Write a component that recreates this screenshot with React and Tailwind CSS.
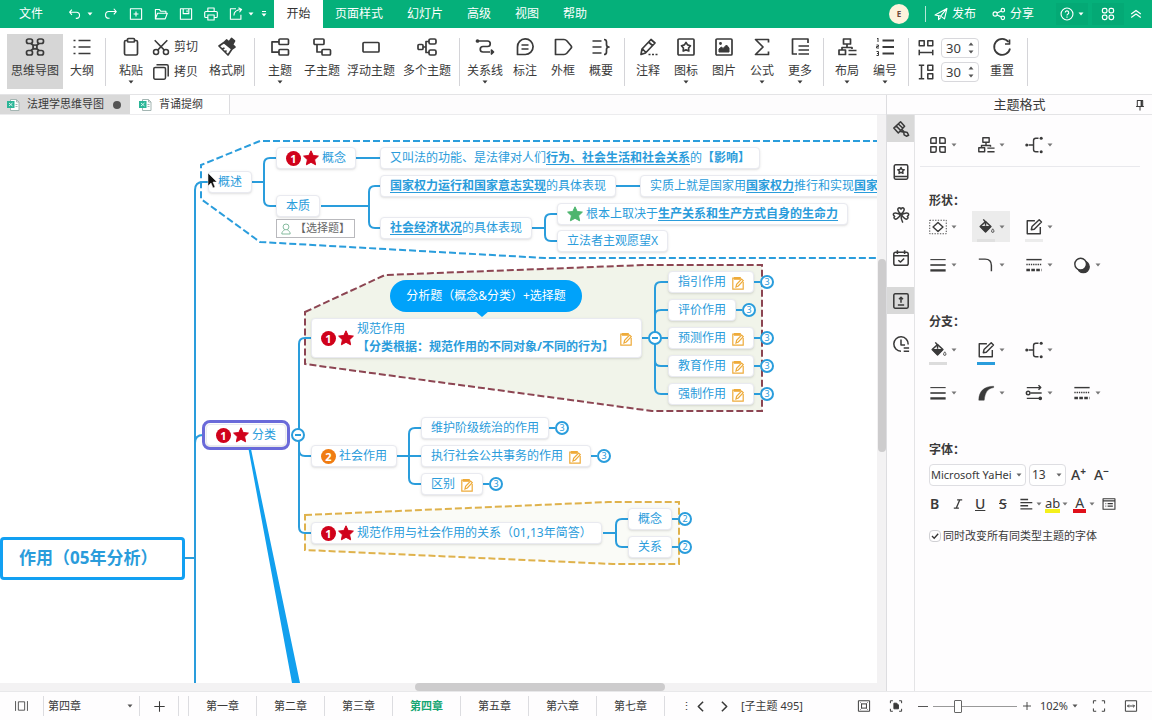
import React, { useState } from 'react';

const ICONS = {
    undo: <path d="M6 2.500 2.500 6.500 6 10.500M2.500 6.500H13a4.700 4.700 0 0 1 0 9.500h-1" />,
    redo: <path d="M14 2.500l3.500 4-3.500 4M17.500 6.500H7A4.700 4.700 0 0 0 7 16h1" />,
    newDoc: <path d="M2 2.500h16v15H2zM10 6.500v7M6.500 10h7" />,
    open: <path d="M2 17V3.500h5.500l2 2.500H17v3M2 17l3-8h14l-3 8z" />,
    save: <path d="M2 2.500h16v15H2zM6 2.500v7h8v-7M11.500 4.500v3" />,
    print: <path d="M5.500 6.500v-5h9v5M5 15H2.500A1.500 1.500 0 0 1 1 13.500V8a1.500 1.500 0 0 1 1.500-1.500h15A1.500 1.500 0 0 1 19 8v5.500a1.500 1.500 0 0 1-1.500 1.500H15M5.500 11.500h9v7h-9z" />,
    exportTo: <path d="M10 2.500H2v15h15V11M7 12c0-5 3-8 10.500-8.500M13.500 1l4.500 2.500L15 7.500" />,
    send: <path d="M1.500 11.500 18.500 2l-3.500 15-5.500-4zM9.500 13 18.500 2M6.500 12.500V18l3-3" />,
    share: <><circle cx="4.500" cy="10" r="3" /><circle cx="15.500" cy="4.500" r="2.500" /><circle cx="15.500" cy="15.500" r="2.500" /><path d="m7.200 8.700 6-3M7.200 11.300l6 3" /></>,
    help: <><circle cx="10" cy="10" r="8.500" /><path d="M7.500 8a2.500 2.500 0 1 1 3.500 2.300c-.7.300-1 .700-1 1.700M10 13.700v1.500" /></>,
    apps: <><rect x="2" y="2" width="6.500" height="6.500" rx="2.500" /><rect x="11.500" y="2" width="6.500" height="6.500" rx="2.500" /><rect x="2" y="11.500" width="6.500" height="6.500" rx="2.500" /><rect x="11.500" y="11.500" width="6.500" height="6.500" rx="2.500" /></>,
    up: <path d="m2 10 8-6 8 6M2 16l8-6 8 6" />,

    mindmap: <><rect x="1.500" y="2" width="6" height="4.500" rx="2" /><rect x="12.500" y="2" width="6" height="4.500" rx="2" /><rect x="1.500" y="13.500" width="6" height="4.500" rx="2" /><rect x="12.500" y="13.500" width="6" height="4.500" rx="2" /><circle cx="10" cy="10" r="2" /><path d="m6 6.500 2.500 2M14 6.500l-2.500 2M6 13.500l2.500-2M14 13.500l-2.500-2" /></>,
    outline: <path d="M1.500 3.500h2M1.500 10h2M1.500 16.500h2M6.500 3.500H18.500M6.500 10H18.500M6.500 16.500H18.500" />,
    paste: <><rect x="3.500" y="3.500" width="13" height="14.500" rx="1.500" /><rect x="6.500" y="1.500" width="7" height="3.500" rx="1" fill="white" /></>,
    cut: <><circle cx="4.500" cy="15.500" r="2.800" /><circle cx="15.500" cy="15.500" r="2.800" /><path d="m3 2.500 10.700 11M17 2.500l-10.700 11" /></>,
    copy: <><rect x="2" y="5" width="13" height="13" rx="1.500" /><path d="M5 2h11.500A1.500 1.500 0 0 1 18 3.500V15" /></>,
    brush: <><path d="m14.500 1.500 3 2.500-2 3.500 2.500 2.500-3 2L7 5.500l2.500-2.500 2.500 2z" fill="currentColor" /><path d="M7 5.500 2 9l9 9 4-6M5 12l2.500-1M8 15l1.500-1.500" /></>,
    topic: <><rect x="9" y="2" width="9.500" height="5.500" rx="1" /><rect x="9" y="12.500" width="9.500" height="5.500" rx="1" /><path d="M9 4.800H2v10.400h7" /></>,
    subtopic: <><rect x="2" y="2" width="10" height="5.500" rx="1" /><rect x="10" y="12.500" width="8.500" height="5.500" rx="1" /><path d="M5 7.500V15h5" /></>,
    floating: <rect x="2" y="5.500" width="16" height="9.500" rx="1" />,
    multi: <><rect x="1" y="7.500" width="5" height="5" rx="1" /><rect x="12" y="2" width="7" height="5" rx="1.500" /><rect x="12" y="13" width="7" height="5" rx="1.500" /><path d="M6 10h3M12 4.500H9v11h3" /></>,
    relation: <><circle cx="2.500" cy="4" r="1" fill="currentColor" /><path d="M4 4h8.500a2.700 2.700 0 0 1 0 5.500H8A2.700 2.700 0 0 0 8 15h7" /><path d="m16.500 13 2 2-2 2z" fill="currentColor" /></>,
    comment: <path d="M2.500 17.500V10A7.800 7.800 0 1 1 10.300 17.500zM6.500 8h7M6.500 12h7" />,
    boundary: <path d="M2.500 2.500h8.500c1.500 0 2 .4 3 1.500l4 4.700c.6.700.6 1.900 0 2.600L14 16c-1 1.100-1.500 1.500-3 1.500H2.500z" />,
    summary: <path d="M1.500 4h9M1.500 10h9M1.500 16h9M13 2.500c2 0 2.500.5 2.500 2.500v2.500c0 1.500.5 2.500 2.500 2.500-2 0-2.500 1-2.500 2.500V15c0 2-.5 2.500-2.500 2.500" />,
    remark: <><path d="M3 17.500 4 12 13 2.500l4 3.500-9.500 10zM10.500 5l4 3.500M4.500 12l3.500 3.500" /><path d="M10.500 17.500h9" strokeDasharray="2 1.500" /></>,
    sticker: <><rect x="2" y="2" width="16" height="16" rx="1" /><path d="m10 5.500 1.600 2.400 2.900.8-1.900 2.300.2 3-2.800-1.100L7.200 14l.2-3-1.900-2.300 2.900-.8z" /></>,
    picture: <><rect x="2" y="2" width="16" height="16" rx="1" /><path d="M5 15v-3l2.500-2L9 11.500 12.500 8l2.500 3v4z" fill="currentColor" strokeWidth="1" /><circle cx="6.500" cy="6.500" r=".6" fill="currentColor" /></>,
    formula: <path d="M16.500 5.500v-3H3.500L11 10l-7.500 7.500h13v-3" />,
    more: <path d="M18 6V2H2.500v15H7M8.500 9H19M8.500 13H19M8.500 17H19" />,
    layout: <><rect x="6.500" y="2" width="7" height="5" /><path d="M10 7v3.500M5 13v-2.500h10V12M11.500 13.500h8M11.500 17.500h8" /><rect x="2" y="13" width="6.500" height="4.500" /></>,
    numbering: <><path d="M7.500 3.500H19M7.500 10H19M7.500 16.500H19" strokeWidth="2.200" /><path d="M2 2l1-1v4M1.500 8h2v1.500h-2V11h2.500M1.500 14.500h2v4h-2M2 16.500h1.500" strokeWidth="1" /></>,
    hgap: <><rect x="2.500" y="2" width="5.500" height="5.500" /><rect x="12" y="2" width="5.500" height="5.500" /><path d="M2.500 12v6M17.500 12v6M2.500 15h15" /></>,
    vgap: <><rect x="12" y="2.500" width="5.500" height="5.500" /><rect x="12" y="12" width="5.500" height="5.500" /><path d="M2 2.500h6M2 17.500h6M5 2.500v15" /></>,
    reset: <><path d="M16.500 5A8 8 0 1 0 18 11.500" /><path d="M17.500 2.500v4.500H13" /></>,

    format: <path d="m2 9 7.500-7 4.500 5-7 7.500zM4.500 6.500 10 12M7 4.500l5.500 5M9 12.500l2-2 2.500 2.500 3.500 1 1.500 3-2.500 1-2.500-1.500-.5-3z" />,
    gallery: <><rect x="2.500" y="2" width="15" height="16" rx="1.500" /><path d="M2.500 15h15M10 5l1.100 2.200 2.400.3-1.700 1.700.4 2.300-2.200-1.100-2.200 1.100.4-2.300-1.700-1.700 2.400-.3z" /></>,
    clover: <><path d="M10 9C6 6 5.500 2.500 8 2c1 0 2 .7 2 1.500C10 2.700 11 2 12 2c2.500.5 2 4-2 7zM9.500 9.500C5 7.500 1.500 7 1.500 9.500c0 1 .5 1.500 1.500 2-.7.500-1 1.500-.5 2.300C4 16 8 13 9.500 9.500zM10.500 9.500c4.500-2 8-2.500 8 0 0 1-.5 1.500-1.500 2 .7.500 1 1.500.5 2.300-1.500 2.200-5.500-.8-7-4.300z" /><path d="M10 9.500c0 4 0 6 2 9" /></>,
    calendar: <><rect x="2" y="3.500" width="16" height="14.500" rx="2" /><path d="M2 7.500h16M6 1.500v4M14 1.500v4M7 12.500l2.500 2 4-4" /></>,
    slides: <><rect x="2" y="2" width="16" height="16" rx="1.500" /><path d="M6.500 14.500h7M10 12V6.500M7.800 8 10 5.800 12.200 8" /></>,
    history: <path d="M18 10.500A8 8 0 1 0 10 18M10 5v6h4.500M13 14.500h6M13 18h6" />,

    squares: <><path d="M2 4a2 2 0 0 1 2-2h4v6H2zM12 2h4a2 2 0 0 1 2 2v4h-6zM2 12h6v4a2 2 0 0 1-2 2H2zM12 12h6v6h-4a2 2 0 0 1-2-2z" /></>,
    branch: <><circle cx="2" cy="10" r="1.700" fill="currentColor" strokeWidth="0" /><path d="M4 10h5.500M15 2.500h-3q-2.500 0-2.500 2.500v10q0 2.500 2.500 2.500h3" /><circle cx="18" cy="2.500" r="1.700" fill="currentColor" strokeWidth="0" /><circle cx="18" cy="17.500" r="1.700" fill="currentColor" strokeWidth="0" /></>,
    shape: <><rect x=".8" y="2.500" width="18.400" height="15" strokeWidth="1" strokeDasharray="1.500 1.500" /><path d="m10 5 5.500 5-5.500 5-5.500-5z" /></>,
    fill: <><path d="m9.500 4 6 5.500-6 6-6-6z" /><path d="M4.500 9.800h10l-5 5z" fill="currentColor" /><path d="M7 1.500 9.500 4.500v4" /><path d="M17.500 12c1 1.500 1.300 2 1.300 2.700a1.300 1.300 0 0 1-2.600 0c0-.7.300-1.200 1.300-2.700z" strokeWidth="1" /></>,
    edit: <><path d="M11 3H2.500v14.500H17V10" /><path d="m7 13 .8-3.500 8-7.500 2.500 2.500-8 8z" /></>,
    weight: <><path d="M1.500 4h17" strokeWidth="1.200" /><path d="M1.500 10h17" strokeWidth="1.800" /><path d="M1.500 16h17" strokeWidth="2.600" /></>,
    corner: <path d="M2 3.500h7q7 0 7 7V17" />,
    dashes: <><path d="M1.500 4h17" /><path d="M1.500 9.500h17" strokeDasharray="1.500 1" /><path d="M1.500 15.500h17" strokeWidth="2.800" strokeDasharray="4 1.500" /></>,
    shadow: <><circle cx="11.500" cy="12" r="6.500" fill="currentColor" /><circle cx="8.500" cy="9" r="6.500" fill="white" /></>,
    taper: <path d="M2 18C2 8 8 2.500 18.500 2.500v1.500C12 5 9 9 8 18z" fill="currentColor" strokeWidth=".5" />,
    arrows: <><path d="M2 4h15M15 1.500 17.500 4 15 6.500M6 10h12.500M2 16h14" /><circle cx="3.500" cy="10" r="2" /><circle cx="17" cy="16" r="1.200" fill="currentColor" /></>,
    align: <path d="M2 3.500h11M2 8h17M2 12.500h11M2 17h17" />,
    italic: <path d="M8.500 3H17M3 17h8.500M13 3 7 17" />,
    dialog: <path d="M1.500 2.500h17v15h-17zM1.500 5.500h17M5 9.500h1M8 9.500h7.500M5 13h1M8 13h7.500" />,
    pin: <><path d="M5.500 2.500h9v10h-9zM3.500 12.500h13M10 12.500V19" /><path d="M12.500 3v9.500" strokeWidth="3" /></>,

    navPane: <path d="M1.500 3v14M18.500 3v14M5.500 4h9v12h-9z" />,
    plus: <path d="M10 2v16M2 10h16" />,
    prev: <path d="m13.500 2-8 8 8 8" />,
    next: <path d="m6.500 2 8 8-8 8" />,
    fit: <path d="M2 2.500h16v15H2zM6.500 7h7v6h-7zM5 5l1.500 1.500M15 5l-1.500 1.500M5 15l1.500-1.500M15 15l-1.500-1.500" />,
    focus: <><path d="M2 6V2.500h3.500M14.500 2.500H18V6M18 14v3.500h-3.500M5.500 17.500H2V14" /><path d="M7 6h4l2.500 2.500V14H7z" fill="currentColor" /></>,
    full: <path d="M2 6.500V2.500h4M14 2.500h4v4M18 13.500v4h-4M6 17.500H2v-4" />,
    fitWidth: <path d="M2 2.500h16v15H2zM5 10h10M7 8l-2 2 2 2M13 8l2 2-2 2" />,
};

function Icon({ name, className = "w-5 h-5", stroke = 1.7 }) {
    return (
        <svg viewBox="0 0 20 20" fill="none" stroke="currentColor" strokeWidth={stroke} strokeLinejoin="round" className={className + " shrink-0"} aria-hidden="true">
            {ICONS[name]}
        </svg>
    );
}

function Caret({ className = "" }) {
    return (
        <svg viewBox="0 0 6 4" className={"w-[6px] h-1 shrink-0 " + className} aria-hidden="true">
            <path d="M0.500 0.500h5L3 3.500z" fill="currentColor" />
        </svg>
    );
}

const QUICK = ["redo", "newDoc", "open", "save", "print"];
const MENUS = ["开始", "页面样式", "幻灯片", "高级", "视图", "帮助"];

function TopBar() {
    const [menu, setMenu] = useState("开始");

    return (
        <header className="h-7 shrink-0 bg-[#05b07a] text-white flex items-stretch text-xs">
            <button className="w-[62px]">文件</button>
            <div className="w-[212px] flex items-center gap-[11px] pl-[6px]">
                <button aria-label="undo" className="flex items-center gap-[6px]">
                    <Icon name="undo" className="w-[13px] h-[13px]" />
                    <Caret />
                </button>
                {QUICK.map((name) => (
                    <button key={name} aria-label={name}><Icon name={name} className="w-[14px] h-[14px]" stroke={1.6} /></button>
                ))}
                <button className="flex items-center gap-[5px]" aria-label="export">
                    <Icon name="exportTo" className="w-[14px] h-[14px]" stroke={1.6} />
                    <Caret />
                </button>
                <button aria-label="customize" className="flex flex-col items-center -ml-1">
                    <span className="w-1 h-px bg-white mb-px"></span>
                    <Caret />
                </button>
            </div>
            <nav className="flex">
                {MENUS.map((name) => (
                    <button
                        key={name}
                        onClick={() => setMenu(name)}
                        className={menu === name ? "w-[49px] bg-white text-[#333]" : "px-3"}
                    >
                        {name}
                    </button>
                ))}
            </nav>
            <div className="ml-auto flex items-center pr-1">
                <span className="w-5 h-5 rounded-full bg-[#fdf3dc] text-[#6b4a3a] text-[8px] font-bold flex items-center justify-center">E</span>
                <span className="w-px h-4 bg-white/70 ml-4"></span>
                <button className="flex items-center gap-1 ml-2"><Icon name="send" className="w-[14px] h-[14px]" stroke={1.6} />发布</button>
                <button className="flex items-center gap-1 ml-4"><Icon name="share" className="w-[14px] h-[14px]" stroke={1.6} />分享</button>
                <button className="w-8 h-[22px] bg-[#04a975] flex items-center justify-center gap-1 ml-[22px]" aria-label="help">
                    <Icon name="help" className="w-[14px] h-[14px]" stroke={1.6} /><Caret />
                </button>
                <button className="w-8 h-[22px] bg-[#04a975] flex items-center justify-center ml-1" aria-label="apps">
                    <Icon name="apps" className="w-[14px] h-[14px]" stroke={1.8} />
                </button>
                <button className="w-6 flex items-center justify-center" aria-label="collapse"><Icon name="up" className="w-3 h-3" stroke={2} /></button>
            </div>
        </header>
    );
}

function Sep() {
    return <span className="w-px h-12 bg-[#d4d4d8] mx-1 mt-1 shrink-0"></span>;
}

function RibbonButton({ icon, label, width = "w-[38px]", caret, active }) {
    return (
        <button className={"h-[55px] pt-[3px] flex flex-col items-center shrink-0 whitespace-nowrap " + width + (active ? " bg-[#d6d6d6]" : "")}>
            <Icon name={icon} />
            <span className="leading-4 mt-[6px]">{label}</span>
            {caret && <Caret className="mt-px" />}
        </button>
    );
}

function GapField({ icon, label }) {
    const [value, setValue] = useState(30);
    return (
        <div className="flex items-center gap-[6px]">
            <Icon name={icon} className="w-[18px] h-[18px]" />
            <span className="w-[38px] h-5 border border-[#d8d8dc] rounded-sm flex items-center justify-between px-1">
                <input aria-label={label} className="w-5 h-[18px] text-[13px] leading-[18px] outline-none" value={value} onChange={(e) => setValue(e.target.value)} />
                <span className="flex flex-col gap-1 text-[#555]">
                    <Caret className="rotate-180" />
                    <Caret />
                </span>
            </span>
        </div>
    );
}

function Ribbon() {
    return (
        <div className="h-[66px] shrink-0 bg-white pt-[6px] pl-[7px] flex items-start text-xs overflow-hidden">
            <RibbonButton icon="mindmap" label="思维导图" width="w-14" active />
            <RibbonButton icon="outline" label="大纲" />
            <Sep />
            <RibbonButton icon="paste" label="粘贴" width="w-[42px]" caret />
            <div className="w-[52px] shrink-0 flex flex-col gap-[5px] pt-[3px] whitespace-nowrap">
                <button className="flex items-center gap-1 h-5"><Icon name="cut" className="w-[18px] h-[18px]" />剪切</button>
                <button className="flex items-center gap-1 h-5"><Icon name="copy" className="w-[18px] h-[18px]" />拷贝</button>
            </div>
            <RibbonButton icon="brush" label="格式刷" width="w-[46px]" />
            <Sep />
            <RibbonButton icon="topic" label="主题" width="w-[42px]" caret />
            <RibbonButton icon="subtopic" label="子主题" width="w-[42px]" />
            <RibbonButton icon="floating" label="浮动主题" width="w-14" />
            <RibbonButton icon="multi" label="多个主题" width="w-14" />
            <Sep />
            <RibbonButton icon="relation" label="关系线" width="w-[42px]" caret />
            <RibbonButton icon="comment" label="标注" />
            <RibbonButton icon="boundary" label="外框" />
            <RibbonButton icon="summary" label="概要" />
            <Sep />
            <RibbonButton icon="remark" label="注释" />
            <RibbonButton icon="sticker" label="图标" caret />
            <RibbonButton icon="picture" label="图片" />
            <RibbonButton icon="formula" label="公式" caret />
            <RibbonButton icon="more" label="更多" caret />
            <Sep />
            <RibbonButton icon="layout" label="布局" caret />
            <RibbonButton icon="numbering" label="编号" caret />
            <Sep />
            <div className="flex flex-col gap-1 pt-1 pl-1 pr-[2px]">
                <GapField icon="hgap" label="水平间距" />
                <GapField icon="vgap" label="垂直间距" />
            </div>
            <RibbonButton icon="reset" label="重置" width="w-[42px]" />
            <Sep />
        </div>
    );
}

function FileIcon() {
    return (
        <svg viewBox="0 0 14 14" className="w-[14px] h-[14px] shrink-0" aria-hidden="true">
            <path d="M4.500 1.500h6l2.500 2.500v8.500h-8.500z" fill="#fff" stroke="#a3b5b2" />
            <path d="M10.500 1.500v2.500h2.500M9.500 6.500h2M9.500 8.500h2" fill="none" stroke="#a3b5b2" />
            <rect x="1" y="3" width="7.500" height="7" fill="#2bb597" />
            <path d="m3 5 3.500 3M6.500 5 3 8" stroke="#d9f5ee" />
        </svg>
    );
}

function DocTabs() {
    return (
        <div className="h-5 shrink-0 flex bg-[#fdfcfd] border-b border-[#ececee] text-[11px]">
            <button className="w-[130px] bg-[#d9d9d9] flex items-center gap-[7px] pl-[6px]">
                <FileIcon />法理学思维导图
                <span className="w-2 h-2 rounded-full bg-[#555] ml-[2px]"></span>
            </button>
            <button className="w-[100px] bg-white flex items-center gap-[7px] pl-2 border-r border-[#dcdcdf]">
                <FileIcon />背诵提纲
            </button>
        </div>
    );
}

function Badge({ n, orange }) {
    return (
        <span className={"w-[15px] h-[15px] rounded-full text-white text-[11px] leading-[15px] text-center font-bold " + (orange ? "bg-[#f07c12]" : "bg-[#d0021b]")}>
            {n}
        </span>
    );
}

function Star({ color = "#d0021b" }) {
    return (
        <svg viewBox="0 0 16 16" className="w-4 h-4 shrink-0" aria-hidden="true">
            <path d="m8 .8 2.200 4.700 5.200.6-3.800 3.600 1 5.100L8 12.300l-4.600 2.500 1-5.100L.6 6.100l5.200-.6z" fill={color} stroke={color} strokeLinejoin="round" />
        </svg>
    );
}

function NoteIcon() {
    return (
        <svg viewBox="0 0 12 14" fill="none" stroke="#eeab3a" strokeWidth="1.200" className="w-3 h-[14px] shrink-0 mt-[2px]" aria-hidden="true">
            <path d="M9 2.200H.8v11h10.400V6" />
            <path d="M2.500 1.700h5.500v1.500H2.500z" fill="#eeab3a" />
            <path d="m4 11 .6-2.600 5-5.400 1.700 1.600-5 5.400z" fill="#fff" />
        </svg>
    );
}

const B = ({ children }) => <b className="font-bold underline underline-offset-2">{children}</b>;

// x is the left edge, y the vertical middle of a node
const NODES = [
    { x: 208, y: 67, text: "概述" },
    { x: 276, y: 43, badge: 1, star: "#d0021b", text: "概念" },
    { x: 276, y: 91, text: "本质" },
    { x: 380, y: 43, text: <>又叫法的功能、是法律对人们<B>行为、社会生活和社会关系</B>的<b>【影响】</b></> },
    { x: 380, y: 71, text: <><B>国家权力运行和国家意志实现</B>的具体表现</> },
    { x: 640, y: 71, text: <>实质上就是国家用<B>国家权力</B>推行和实现<B>国家</B></> },
    { x: 380, y: 113, text: <><B>社会经济状况</B>的具体表现</> },
    { x: 557, y: 99, star: "#4db56e", text: <>根本上取决于<B>生产关系和生产方式自身的生命力</B></> },
    { x: 557, y: 126, text: "立法者主观愿望X" },
    { x: 311, y: 223, badge: 1, star: "#d0021b", note: true, tall: true, text: <>规范作用<br /><b>【分类根据：规范作用的不同对象/不同的行为】</b></> },
    { x: 668, y: 167, note: true, count: 3, text: "指引作用" },
    { x: 668, y: 195, count: 3, text: "评价作用" },
    { x: 668, y: 223, note: true, count: 3, text: "预测作用" },
    { x: 668, y: 251, note: true, count: 3, text: "教育作用" },
    { x: 668, y: 279, note: true, count: 3, text: "强制作用" },
    { x: 206, y: 320, badge: 1, star: "#d0021b", selected: true, text: "分类" },
    { x: 311, y: 341, badge: 2, text: "社会作用" },
    { x: 421, y: 313, count: 3, text: "维护阶级统治的作用" },
    { x: 421, y: 341, note: true, count: 3, text: "执行社会公共事务的作用" },
    { x: 421, y: 369, note: true, count: 3, text: "区别" },
    { x: 311, y: 418, badge: 1, star: "#d0021b", text: "规范作用与社会作用的关系（01,13年简答）" },
    { x: 628, y: 404, count: 2, text: "概念" },
    { x: 628, y: 432, count: 2, text: "关系" },
];

function Node({ node }) {
    return (
        <div className="absolute flex items-center -translate-y-1/2" style={{ left: node.x, top: node.y }}>
            <div
                className={
                    "flex items-center bg-white border border-[#e9eaf0] rounded-sm shadow-sm px-[9px] whitespace-nowrap "
                    + (node.tall ? "h-10 " : "h-[22px] ")
                    + (node.selected ? "outline-3 outline-offset-1 outline-[#6a6ad9]" : "")
                }
            >
                {node.badge && <Badge n={node.badge} orange={node.badge === 2} />}
                {node.star && <span className={node.badge ? "ml-[2px] mr-[3px]" : "mr-[3px]"}><Star color={node.star} /></span>}
                {node.badge && !node.star && <span className="w-[3px]"></span>}
                <span className="leading-[18px]">{node.text}</span>
                {node.note && <span className="ml-[6px]"><NoteIcon /></span>}
            </div>
            {node.count && (
                <>
                    <span className="w-[6px] h-[2px] bg-[#2a9ddc]"></span>
                    <button className="w-[14px] h-[14px] rounded-full bg-white border-2 border-[#2a9ddc] text-[9px] leading-[10px] text-center">{node.count}</button>
                </>
            )}
        </div>
    );
}

function Fold({ x, y }) {
    return (
        <button className="absolute w-[14px] h-[14px] rounded-full bg-white border-2 border-[#2a9ddc] flex items-center justify-center -translate-1/2" style={{ left: x, top: y }} aria-label="fold">
            <span className="w-[6px] h-[2px] bg-[#2a9ddc]"></span>
        </button>
    );
}

function Canvas() {
    return (
        <div className="relative flex-1 min-h-0 overflow-hidden bg-white text-[#2a9cdb] text-xs">
            <svg width="1200" height="900" className="absolute left-0 top-0" fill="none" aria-hidden="true">
                {/* boundaries */}
                <path d="M900 26H260L201 50V84L260 127 545 143H900" stroke="#2a9ddc" strokeWidth="2" strokeDasharray="7 3" />
                <path d="M305 197 385 160 645 150H762V296H652L305 249z" fill="#f1f4ea" stroke="#8c4552" strokeWidth="2" strokeDasharray="7 3" />
                <path d="M305 400 608 387H679V449H613L305 435z" fill="#fafbf7" stroke="#dfb24c" strokeWidth="2" strokeDasharray="7 3" />
                {/* branches */}
                <g stroke="#2a9ddc" strokeWidth="2">
                    <path d="M208 67h-5q-8 0-8 8V900M184 443h11M195 328q0-8 8-8" />
                    <path d="M252 67h12M276 43h-6q-6 0-6 6v36q0 6 6 6h6M355 43h25M321 91h48" />
                    <path d="M380 71h-5q-6 0-6 6v30q0 6 6 6h5M616 71h24M532 113h13M557 99h-6q-6 0-6 6v15q0 6 6 6h6" />
                    <path d="M311 223h-6q-6 0-6 6v183q0 6 6 6h6M299 335q0 6 6 6h6" />
                    <path d="M641 223h27M668 167h-7q-6 0-6 6v100q0 6 6 6h7M655 200q0-5 6-5h7M655 246q0 5 6 5h7" />
                    <path d="M397 341h24M421 313h-6q-6 0-6 6v44q0 6 6 6h6" />
                    <path d="M603 418h13M628 404h-6q-6 0-6 6v16q0 6 6 6h6" />
                </g>
            </svg>
            <div className="absolute left-0 top-[422px] h-[43px] px-4 rounded border-[3px] border-[#12a0f2] bg-white flex items-center text-[17px] font-bold whitespace-nowrap w-[185px]">
                作用（05年分析）
            </div>
            {NODES.map((node, index) => (
                <Node key={index} node={node} />
            ))}
            <Fold x={655} y={223} />
            <Fold x={298} y={320} />

            <div className="absolute left-[276px] top-[104px] h-[19px] w-[79px] border border-[#b9b9bd] bg-white text-[#666] flex items-center gap-1 pl-1">
                <svg viewBox="0 0 12 14" fill="none" stroke="#6fae8d" className="w-[10px] h-3 shrink-0" aria-hidden="true">
                    <circle cx="6" cy="4.500" r="3.500" />
                    <path d="M4.500 8C2 9.500 1 10.500 1 13h10c0-2.500-1-3.500-3.500-5" />
                </svg>
                <span className="text-[11px]">【选择题】</span>
            </div>

            <div className="absolute left-[390px] top-[165px] w-[192px] h-8 rounded-full bg-[#00a2fa] text-white flex items-center justify-center whitespace-nowrap">
                分析题（概念&amp;分类）+选择题
            </div>
            <svg width="1200" height="900" className="absolute left-0 top-0 pointer-events-none" aria-hidden="true">
                <path d="M475 196h14l-7 6z" fill="#00a2fa" />
                {/* relationship line, grows wider towards its far end */}
                <path d="M248.500 334h2.500L300 568l16 80h-16l-8-80z" fill="#12a0ee" />
                <path d="M208 58v13l3-3 2 5 2-1-2-5h4z" fill="#111" stroke="#fff" strokeWidth=".5" />
            </svg>
        </div>
    );
}

function CanvasPane() {
    return (
        <div className="flex-1 min-w-0 flex">
            <div className="flex-1 min-w-0 flex flex-col">
                <Canvas />
                <div className="h-2 shrink-0 bg-[#f3f2f3] flex">
                    <div className="ml-[415px] w-[250px] h-2 rounded-sm bg-[#cdcccd]"></div>
                </div>
            </div>
            <div className="w-[9px] shrink-0 bg-[#f3f2f3] pl-px pt-[144px]">
                <div className="w-2 h-[193px] rounded-sm bg-[#cdcccd]"></div>
            </div>
        </div>
    );
}

function Tool({ icon, active, bar }) {
    return (
        <button className={"w-[38px] h-[31px] pl-[5px] flex items-center gap-1 relative " + (active ? "bg-[#ececec]" : "")} aria-label={icon}>
            <Icon name={icon} className="w-[18px] h-[18px]" stroke={1.6} />
            <Caret className="text-[#777]" />
            {bar && <span className={"absolute left-[5px] bottom-0 w-[18px] h-[3px] " + bar}></span>}
        </button>
    );
}

const SIDE = ["format", "gallery", "clover", "calendar", "slides", "history"];

function FormatPanel() {
    const [syncAll, setSyncAll] = useState(true);

    return (
        <aside className="w-[266px] shrink-0 border-l border-[#dddde0] bg-[#fefdfe] flex flex-col">
            <div className="h-5 shrink-0 border-b border-[#e4e4e6] relative flex items-center justify-center">
                <h2 className="text-[13px]">主题格式</h2>
                <button className="absolute right-[6px] top-1" aria-label="pin"><Icon name="pin" className="w-3 h-3" /></button>
            </div>
            <div className="flex-1 flex min-h-0">
                <div className="w-7 flex flex-col items-center gap-4 border-r border-[#e4e4e6]">
                    {SIDE.map((name) => (
                        <button
                            key={name}
                            aria-label={name}
                            className={"w-[27px] h-[27px] flex items-center justify-center " + (name === "format" || name === "slides" ? "bg-[#d9d9d9]" : "")}
                        >
                            <Icon name={name} className="w-[18px] h-[18px]" />
                        </button>
                    ))}
                </div>
                <div className="flex-1 pl-[9px] pt-[14px]">
                    <div className="flex gap-[10px]">
                        <Tool icon="squares" /><Tool icon="layout" /><Tool icon="branch" />
                    </div>
                    <hr className="border-[#e9e9ed] mt-[6px] mr-3 -ml-1" />

                    <h3 className="text-xs leading-5 font-bold mt-6 pl-[5px]">形状：</h3>
                    <div className="flex gap-[10px]">
                        <Tool icon="shape" /><Tool icon="fill" active bar="bg-[#e0e0e0]" /><Tool icon="edit" bar="bg-[#ececec]" />
                    </div>
                    <div className="flex gap-[10px] mt-[7px]">
                        <Tool icon="weight" /><Tool icon="corner" /><Tool icon="dashes" /><Tool icon="shadow" />
                    </div>

                    <h3 className="text-xs leading-5 font-bold mt-8 pl-[5px]">分支：</h3>
                    <div className="flex gap-[10px] mt-[2px]">
                        <Tool icon="fill" bar="bg-[#dcdcdc]" /><Tool icon="edit" bar="bg-[#2a9ddc]" /><Tool icon="branch" />
                    </div>
                    <div className="flex gap-[10px] mt-3">
                        <Tool icon="weight" /><Tool icon="taper" /><Tool icon="arrows" /><Tool icon="dashes" />
                    </div>

                    <h3 className="text-xs leading-5 font-bold mt-8 pl-[5px]">字体：</h3>
                    <div className="flex items-center gap-[3px] mt-1 pl-[5px] text-[11px]">
                        <span className="relative">
                            <select aria-label="字体" className="appearance-none block w-[97px] h-[22px] border border-[#dedee2] rounded-sm pl-px bg-white">
                                <option>Microsoft YaHei</option>
                            </select>
                            <Caret className="absolute right-1 top-[9px] text-[#666]" />
                        </span>
                        <span className="relative">
                            <select aria-label="字号" className="appearance-none block w-[37px] h-[22px] border border-[#dedee2] rounded-sm pl-[2px] bg-white text-xs">
                                <option>13</option>
                            </select>
                            <Caret className="absolute right-1 top-[9px] text-[#666]" />
                        </span>
                        <button className="w-5 text-sm leading-5 font-medium flex ml-[2px]">A<sup className="text-[10px] leading-3 top-0 font-bold">+</sup></button>
                        <button className="w-5 text-sm leading-5 font-medium flex">A<sup className="text-[10px] leading-3 top-0 font-bold">−</sup></button>
                    </div>
                    <div className="flex items-center h-5 mt-2 pl-[5px] text-sm leading-5">
                        <button className="w-[23px] text-left font-semibold pl-px">B</button>
                        <button className="w-[23px] text-left" aria-label="italic"><Icon name="italic" className="w-3 h-3" stroke={2.2} /></button>
                        <button className="w-[23px] text-left underline font-medium">U</button>
                        <button className="w-[19px] text-left line-through font-medium pl-px">S</button>
                        <button className="w-[25px] flex items-center justify-end gap-[3px]" aria-label="align">
                            <Icon name="align" className="w-[14px] h-[14px]" stroke={2} /><Caret className="text-[#777]" />
                        </button>
                        <button className="flex items-center gap-[2px] ml-[3px] text-[13px]"><span className="h-[17px] leading-[14px] border-b-4 border-[#f4f01c]">ab</span><Caret className="text-[#777]" /></button>
                        <button className="flex items-center gap-[3px] ml-[5px]"><span className="h-[17px] w-[13px] leading-[14px] text-center border-b-4 border-[#e0101a]">A</span><Caret className="text-[#777]" /></button>
                        <button className="ml-[7px]" aria-label="more"><Icon name="dialog" className="w-[14px] h-[14px]" stroke={1.6} /></button>
                    </div>
                    <label className="flex items-center gap-[2px] h-5 mt-3 pl-[5px] text-[11px] whitespace-nowrap">
                        <span className="relative w-3 h-3">
                            <input type="checkbox" checked={syncAll} onChange={(e) => setSyncAll(e.target.checked)} className="appearance-none block w-3 h-3 border border-[#d0d0d4] rounded-sm" />
                            {syncAll && (
                                <svg viewBox="0 0 12 12" fill="none" stroke="#333" strokeWidth="1.300" className="absolute left-0 top-0 w-3 h-3 pointer-events-none" aria-hidden="true">
                                    <path d="M3 6l2.200 2.300L9.200 3.700" />
                                </svg>
                            )}
                        </span>
                        同时改变所有同类型主题的字体
                    </label>
                </div>
            </div>
        </aside>
    );
}

const SHEETS = ["第一章", "第二章", "第三章", "第四章", "第五章", "第六章", "第七章"];

function StatusBar() {
    const [sheet, setSheet] = useState("第四章");
    const [zoom, setZoom] = useState(28);

    return (
        <footer className="h-[29px] shrink-0 bg-[#fefdfe] border-t border-[#e8e8ea] flex items-center text-[11px]">
            <button className="w-[43px] flex justify-center" aria-label="nav"><Icon name="navPane" className="w-[15px] h-[14px]" stroke={1.2} /></button>
            <span className="relative">
                <select aria-label="画布" value={sheet} onChange={(e) => setSheet(e.target.value)} className="appearance-none block w-[97px] h-5 border-x border-[#dcdce0] pl-1">
                    {SHEETS.map((s) => <option key={s}>{s}</option>)}
                </select>
                <Caret className="absolute right-[7px] top-2 text-[#555]" />
            </span>
            <button className="w-[38px] flex justify-center" aria-label="add"><Icon name="plus" className="w-[13px] h-[13px]" stroke={1.6} /></button>
            <div className="flex border-l border-[#dcdce0] pl-[9px]">
                <div className="flex border-l border-[#dcdce0]">
                    {SHEETS.map((s) => (
                        <button
                            key={s}
                            onClick={() => setSheet(s)}
                            className={"w-[68px] h-5 border-r border-[#dcdce0] " + (s === sheet ? "text-[#17a673] font-bold" : "")}
                        >
                            {s}
                        </button>
                    ))}
                </div>
            </div>
            <span className="w-[42px] text-center">⋮</span>
            <div className="flex gap-[11px] -ml-3">
                <button aria-label="prev"><Icon name="prev" className="w-3 h-[15px]" stroke={2.6} /></button>
                <button aria-label="next"><Icon name="next" className="w-3 h-[15px]" stroke={2.6} /></button>
            </div>
            <span className="ml-[11px]">[子主题 495]</span>
            <div className="ml-auto flex items-center pr-[14px]">
                <button className="mr-[18px]" aria-label="fit"><Icon name="fit" className="w-[14px] h-[14px]" stroke={1.4} /></button>
                <button className="mr-[15px]" aria-label="focus"><Icon name="focus" className="w-[14px] h-[14px]" stroke={1.4} /></button>
                <button aria-label="zoom out" className="w-[10px] h-3 flex items-center"><span className="w-[10px] h-px bg-[#555]"></span></button>
                <input
                    type="range"
                    aria-label="zoom"
                    value={zoom}
                    onChange={(e) => setZoom(e.target.value)}
                    className="appearance-none w-[84px] h-px bg-[#999] mx-[5px] [&::-webkit-slider-thumb]:appearance-none [&::-webkit-slider-thumb]:w-2 [&::-webkit-slider-thumb]:h-[13px] [&::-webkit-slider-thumb]:bg-white [&::-webkit-slider-thumb]:border [&::-webkit-slider-thumb]:border-[#666] [&::-webkit-slider-thumb]:rounded-[1px]"
                />
                <button aria-label="zoom in"><Icon name="plus" className="w-[10px] h-[10px]" stroke={1.8} /></button>
                <button className="flex items-center gap-1 ml-2">102%<Caret className="text-[#555]" /></button>
                <button className="ml-[14px]" aria-label="full screen"><Icon name="full" className="w-[14px] h-[14px]" stroke={1.4} /></button>
                <button className="ml-[18px]" aria-label="fit width"><Icon name="fitWidth" className="w-[14px] h-[14px]" stroke={1.4} /></button>
            </div>
        </footer>
    );
}

function App() {
    return (
        <div className="h-screen flex flex-col overflow-hidden bg-white text-[#3a3a3a] font-['Noto_Sans','Noto_Sans_CJK_SC',sans-serif]">
            <TopBar />
            <Ribbon />
            <div className="flex-1 min-h-0 flex border-t border-[#e4e4e6]">
                <div className="flex-1 min-w-0 flex flex-col">
                    <DocTabs />
                    <div className="flex-1 min-h-0 flex">
                        <CanvasPane />
                    </div>
                </div>
                <FormatPanel />
            </div>
            <StatusBar />
        </div>
    );
}

export default App;
